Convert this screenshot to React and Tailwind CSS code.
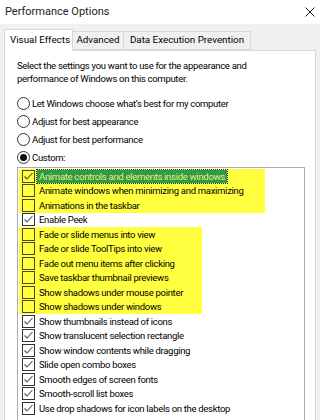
const GROUP_A = [
  { label: "Animate controls and elements inside windows", checked: true, selected: true },
  { label: "Animate windows when minimizing and maximizing" },
  { label: "Animations in the taskbar" },
];

const GROUP_B = [
  { label: "Fade or slide menus into view" },
  { label: "Fade or slide ToolTips into view" },
  { label: "Fade out menu items after clicking" },
  { label: "Save taskbar thumbnail previews" },
  { label: "Show shadows under mouse pointer" },
  { label: "Show shadows under windows" },
];

const REST = [
  "Show thumbnails instead of icons",
  "Show translucent selection rectangle",
  "Show window contents while dragging",
  "Slide open combo boxes",
  "Smooth edges of screen fonts",
  "Smooth-scroll list boxes",
  "Use drop shadows for icon labels on the desktop",
];

const RADIOS = [
  { label: "Let Windows choose what\u2019s best for my computer" },
  { label: "Adjust for best appearance" },
  { label: "Adjust for best performance" },
  { label: "Custom:", on: true },
];

const Check = ({ checked, hl }) => (
  <span
    className={`w-[13px] h-[13px] shrink-0 border flex items-center justify-center ${
      hl ? "border-[#4a4a1c]" : "border-[#333333] bg-white"
    }`}
  >
    {checked && (
      <svg width="11" height="11" viewBox="0 0 11 11">
        <path d="M1.5 5.5 L4 8 L9.5 2" fill="none" stroke={hl ? "#4a4a1c" : "#555"} strokeWidth="1.1" />
      </svg>
    )}
  </span>
);

const Row = ({ label, checked, selected, hl }) => (
  <div className="h-[14.5px] flex items-center pl-[3px] gap-[2px]">
    <Check checked={checked} hl={hl} />
    <span
      className={`leading-[13px] px-[2px] whitespace-nowrap ${
        selected ? "bg-[#2e9a4c] text-[#e8f070] outline outline-1 outline-dotted outline-[#1c3a10]" : "text-black"
      }`}
    >
      {label}
    </span>
  </div>
);

export default function App() {
  return (
    <div
      className="w-[320px] h-[420px] overflow-hidden bg-[#f0f0f0] text-[9.5px] tracking-[-0.3px] text-black"
      style={{ fontFamily: "Roboto, 'Liberation Sans', sans-serif" }}
    >
      {/* title bar */}
      <div className="h-[24px] bg-white flex items-center justify-between pl-[5px] pr-[5px] tracking-normal">
        <span className="text-[11px] text-[#222]">Performance Options</span>
        <svg width="10" height="10" viewBox="0 0 10 10">
          <path d="M0.5 0.5 L9.5 9.5 M9.5 0.5 L0.5 9.5" stroke="#222" strokeWidth="1" />
        </svg>
      </div>

      {/* tabs */}
      <div className="flex items-end pl-[4px] pt-[5px] relative z-10 text-[9.8px] tracking-normal">
        <div className="h-[22px] w-[69px] bg-white border border-b-0 border-[#d9d9d9] flex items-center pl-[5px] -mb-px whitespace-nowrap">
          Visual Effects
        </div>
        <div className="h-[19px] w-[51px] border border-l-0 border-[#d9d9d9] flex items-center justify-center whitespace-nowrap">
          Advanced
        </div>
        <div className="h-[19px] w-[127px] border border-l-0 border-[#d9d9d9] flex items-center justify-center whitespace-nowrap">
          Data Execution Prevention
        </div>
      </div>

      {/* panel */}
      <div className="ml-[4px] w-[312px] h-[380px] bg-white border border-[#d9d9d9] pt-[8px] pl-[12px]">
        <p className="leading-[13px] whitespace-nowrap">
          Select the settings you want to use for the appearance and
          <br />
          performance of Windows on this computer.
        </p>

        <div className="mt-[9px] flex flex-col">
          {RADIOS.map((r) => (
            <div key={r.label} className="h-[18px] flex items-center gap-[2px]">
              <span className="w-[13px] h-[13px] rounded-full border border-[#333] flex items-center justify-center">
                {r.on && <span className="w-[7px] h-[7px] rounded-full bg-[#111]" />}
              </span>
              <span className="leading-[13px] whitespace-nowrap">{r.label}</span>
            </div>
          ))}
        </div>

        {/* list box */}
        <div className="mt-[1px] w-[288px] h-[260px] border border-[#abadb3] pt-[1px] pl-[1px]">
          <div className="w-[246px] bg-[#ffff40]">
            {GROUP_A.map((it) => (
              <Row key={it.label} {...it} hl />
            ))}
          </div>
          <Row label="Enable Peek" checked />
          <div className="w-[183px] bg-[#ffff40]">
            {GROUP_B.map((it) => (
              <Row key={it.label} {...it} hl />
            ))}
          </div>
          {REST.map((l) => (
            <Row key={l} label={l} checked />
          ))}
        </div>
      </div>
    </div>
  );
}
